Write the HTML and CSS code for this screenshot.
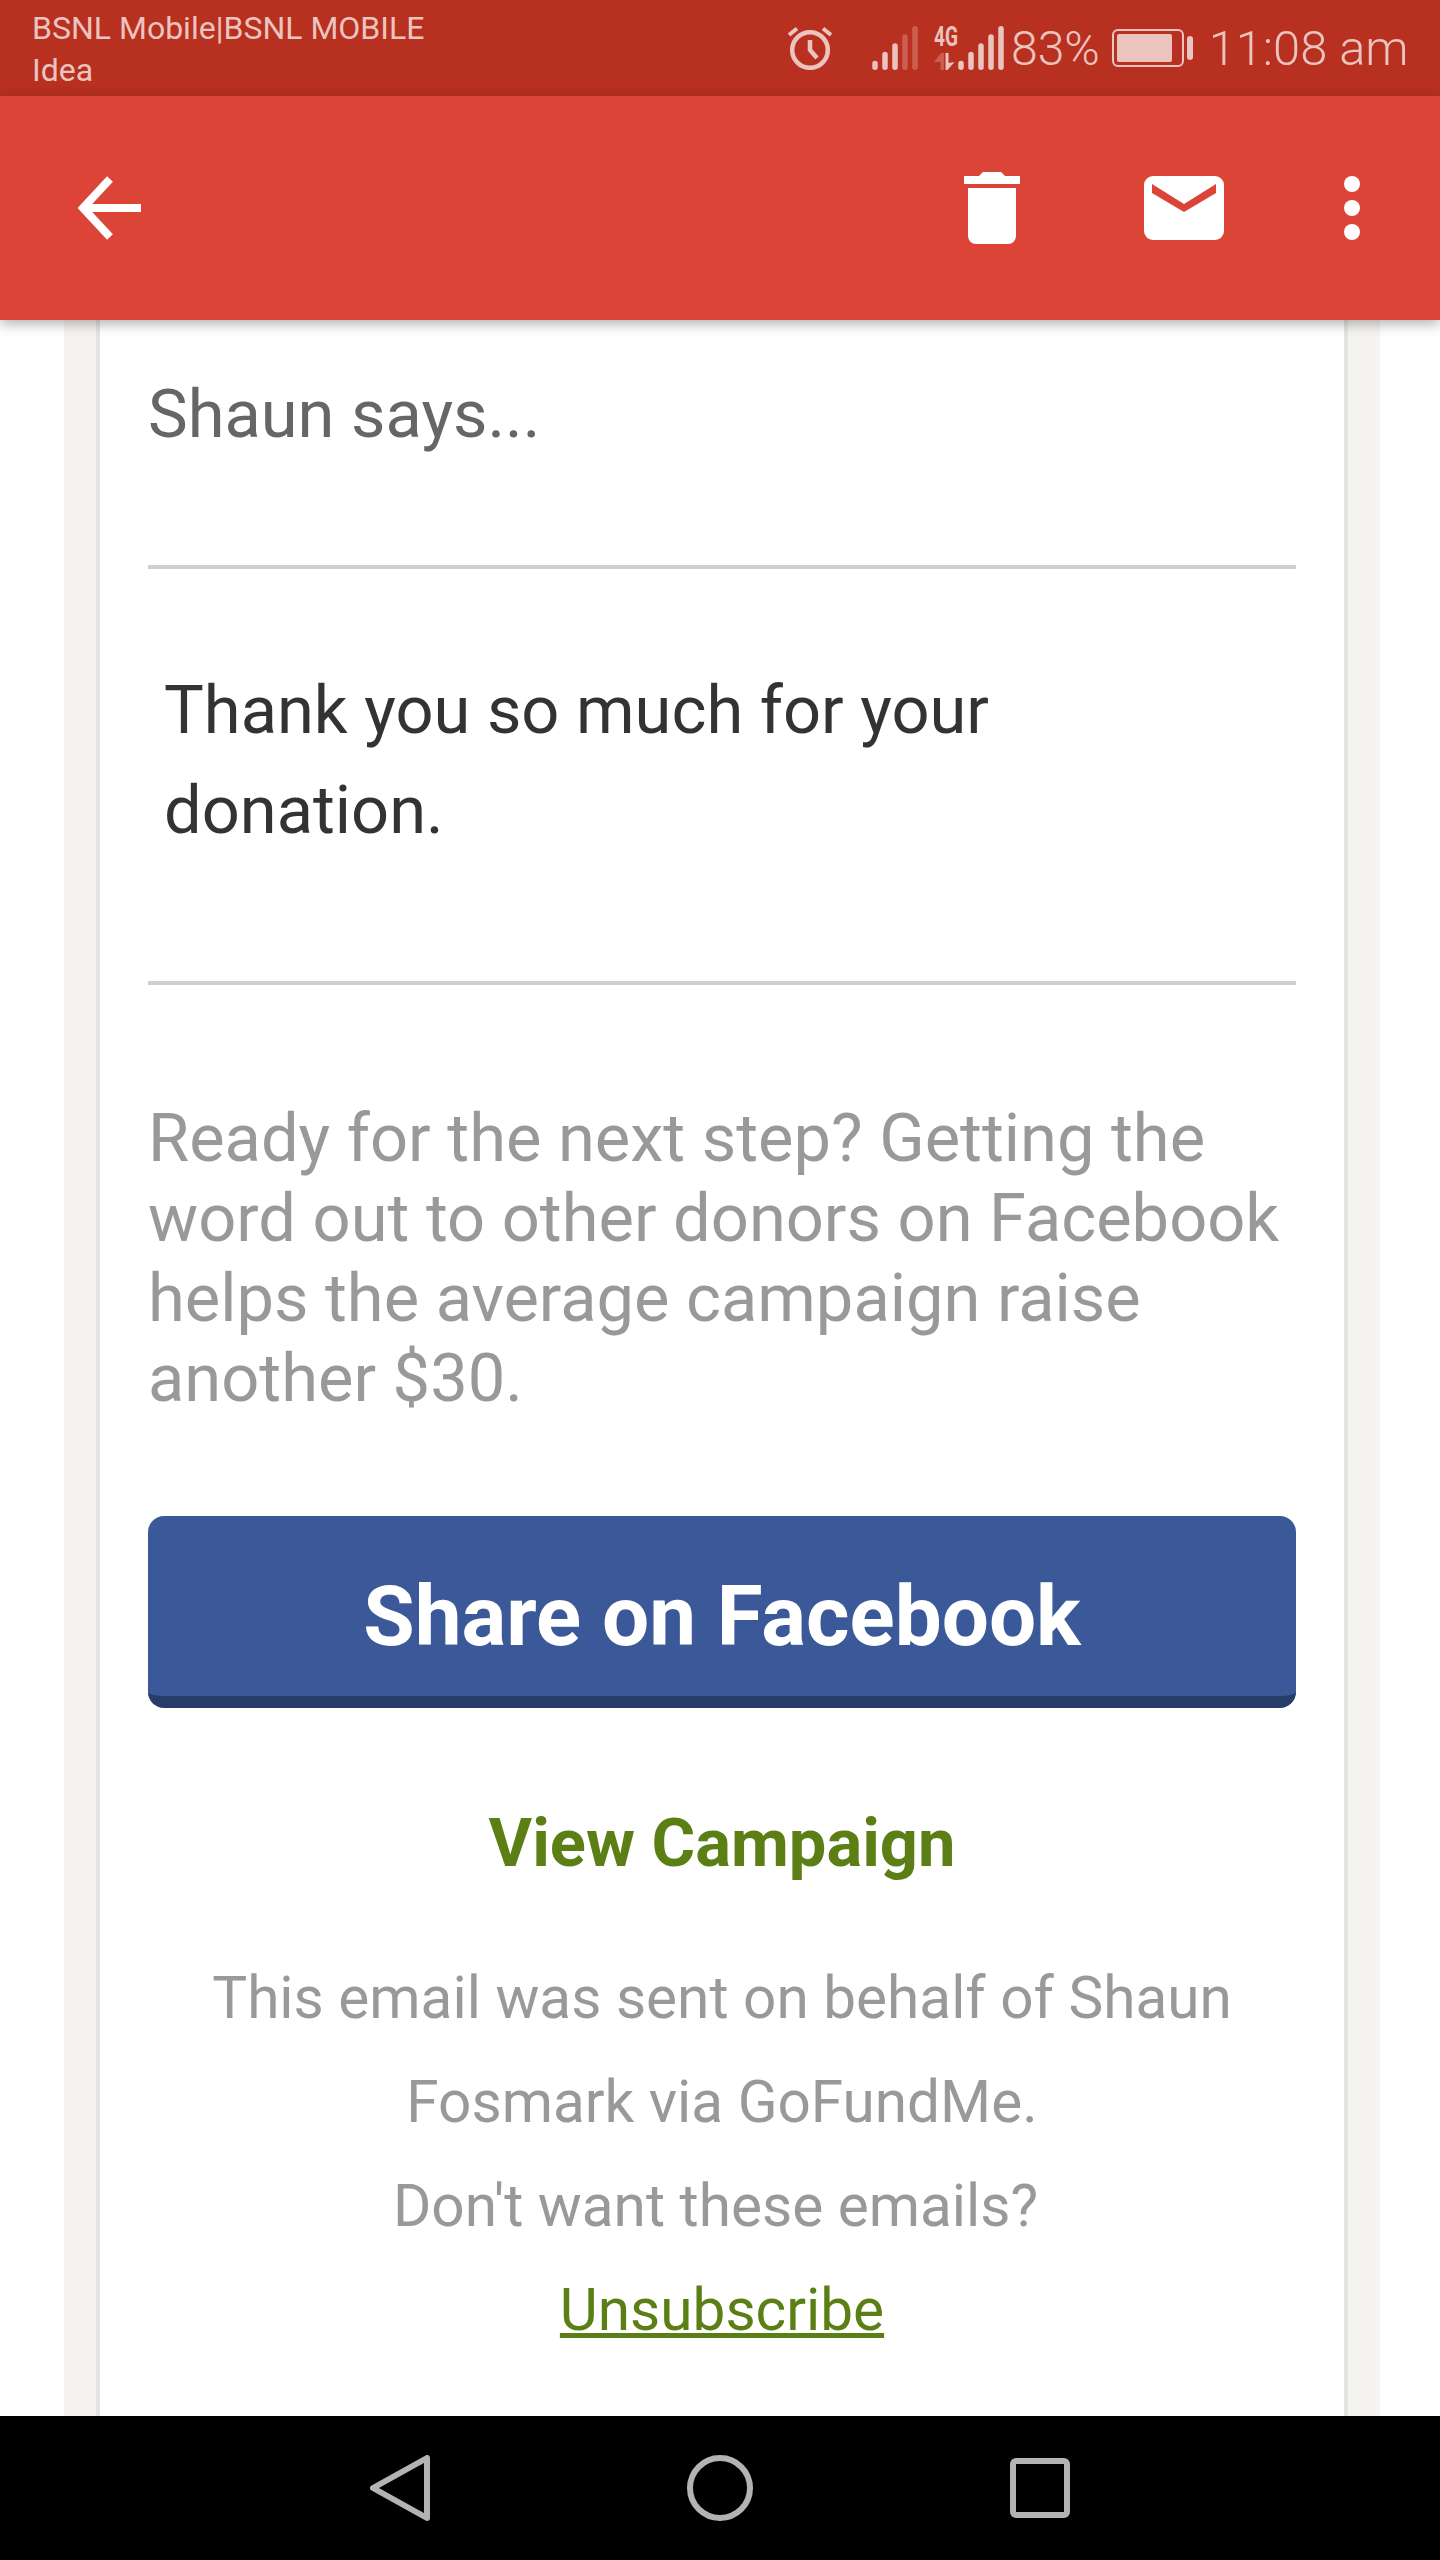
FILE: index.html
```html
<!DOCTYPE html>
<html lang="en">
<head>
  <meta charset="UTF-8" />
  <title>Mail</title>
  <link rel="stylesheet" href="styles.css">
</head>
<body>
<div class="phone">
  <div class="statusbar">
    <div class="carrier">
      <div>BSNL Mobile|BSNL MOBILE</div>
      <div>Idea</div>
    </div>
    <svg class="ic-alarm" width="44" height="44" viewBox="0 0 44 44">
      <circle cx="22" cy="24" r="17.8" fill="none" stroke="#ebc4bf" stroke-width="4.5"/>
      <path d="M22 14v10l7 8" fill="none" stroke="#ebc4bf" stroke-width="4.5"/>
      <path d="M1 9l8-6.5M43 9l-8-6.5" fill="none" stroke="#ebc4bf" stroke-width="4"/>
    </svg>
    <svg class="ic-signal" width="46" height="44" viewBox="0 0 46 44">
      <g fill="none" stroke-width="5.5" stroke-linecap="round">
        <path d="M3 41.2v-3.7M13 41.2v-12.7M23 41.2v-21.2" stroke="#ebc4bf"/>
        <path d="M33 41.2v-30.2M43 41.2v-38.4" stroke="#cd5d50"/>
      </g>
    </svg>
    <svg class="ic-signal2" width="70" height="50" viewBox="0 -6 70 50">
      <text class="lte" x="0" y="20" textLength="24" lengthAdjust="spacingAndGlyphs">4G</text>
      <path d="M0 36l7-9h3v17H6.5V36z" fill="#cd5d50"/>
      <path d="M11.5 27h3v10l6-1-7 8h-2z" fill="#ebc4bf"/>
      <g fill="none" stroke="#ebc4bf" stroke-width="5.5" stroke-linecap="round">
        <path d="M27 41.2v-3.7M37 41.2v-12.7M47 41.2v-21.2M57 41.2v-30.2M67 41.2v-38.4"/>
      </g>
    </svg>
    <span class="pct">83%</span>
    <svg class="ic-battery" width="82" height="38" viewBox="0 0 82 38">
      <rect x="1" y="1" width="70" height="36" rx="5" fill="none" stroke="#ebc4bf" stroke-width="2"/>
      <rect x="5" y="5" width="55" height="28" rx="2" fill="#ebc4bf"/>
      <rect x="75" y="7" width="6" height="24" rx="3" fill="#ebc4bf"/>
    </svg>
    <span class="clock">11:08 am</span>
  </div>

  <div class="toolbar">
    <svg class="ic-back" width="64" height="64" viewBox="0 0 64 64">
      <path d="M32 3L5 32l27 29M5 32h58" fill="none" stroke="#fff" stroke-width="8"/>
    </svg>
    <svg class="ic-trash" width="56" height="72" viewBox="0 0 56 72">
      <path d="M15 4l4-4h18l4 4h15v8H0V4z" fill="#fff"/>
      <path d="M4 16h48v48a8 8 0 0 1-8 8H12a8 8 0 0 1-8-8z" fill="#fff"/>
    </svg>
    <svg class="ic-mail" width="80" height="64" viewBox="0 0 80 64">
      <rect width="80" height="64" rx="9" fill="#fff"/>
      <path d="M8 8l32 20L72 8v9L40 36 8 17z" fill="#db4437"/>
    </svg>
    <div class="dots"><i></i><i></i><i></i></div>
  </div>

  <main class="mailview">
    <div class="wrap">
      <div class="card">
        <div class="says">Shaun says...</div>
        <div class="note">Thank you so much for your donation.</div>
        <p class="next">Ready for the next step? Getting the word out to other donors on Facebook helps the average campaign raise another $30.</p>
        <a class="fb-btn">Share on Facebook</a>
        <a class="view-link">View Campaign</a>
        <div class="foot">
          <div>This email was sent on behalf of Shaun</div>
          <div>Fosmark via GoFundMe.</div>
          <div class="foot-ask">Don't want these emails?</div>
          <div><a class="unsub">Unsubscribe</a></div>
        </div>
      </div>
    </div>
  </main>

  <div class="navbar">
    <svg width="60" height="66" viewBox="0 0 60 66">
      <path d="M57 3v60L3 33z" fill="none" stroke="#b3b3b3" stroke-width="6" stroke-linejoin="round"/>
    </svg>
    <svg width="66" height="66" viewBox="0 0 66 66">
      <circle cx="33" cy="33" r="30" fill="none" stroke="#b3b3b3" stroke-width="6"/>
    </svg>
    <svg width="60" height="60" viewBox="0 0 60 60">
      <rect x="3" y="3" width="54" height="54" rx="3" fill="none" stroke="#b3b3b3" stroke-width="6"/>
    </svg>
  </div>
</div>
</body>
</html>
```

FILE: styles.css
```css
* { box-sizing: border-box; }
html, body { margin: 0; padding: 0; }
body { font-family: Roboto, sans-serif; background: #fff; }
.phone { width: 1440px; height: 2560px; display: flex; flex-direction: column; overflow: hidden; }

.statusbar { height: 96px; flex: none; background: #b73020; color: #ebc4bf; display: flex; align-items: flex-start; padding-left: 32px; }
.carrier { font-size: 32px; line-height: 42px; padding-top: 7px; width: 756px; }
.ic-alarm { margin-top: 26px; }
.ic-signal { margin: 26px 0 0 40px; }
.ic-signal2 { margin: 20px 0 0 16px; }
.lte { font: 700 27px Roboto, sans-serif; fill: #ebc4bf; }
.pct { font-size: 48px; font-weight: 300; line-height: 56px; margin: 21px 0 0 7px; }
.ic-battery { margin: 29px 0 0 12px; }
.clock { font-size: 48.8px; font-weight: 300; line-height: 56px; margin: 21px 0 0 15px; }

.toolbar { height: 224px; flex: none; background: #db4437; display: flex; align-items: center; padding-left: 78px; box-shadow: 0 4px 12px rgba(0,0,0,0.3); position: relative; z-index: 2; }
.ic-back { margin-right: 822px; }
.ic-mail { margin-left: 124px; }
.dots { margin-left: 120px; display: flex; flex-direction: column; gap: 8px; }
.dots i { display: block; width: 16px; height: 16px; border-radius: 50%; background: #fff; }

.mailview { flex: 1; overflow: hidden; }
.wrap { width: 1316px; margin-left: 64px; padding: 0 32px; background: #f5f4f0; height: 100%; }
.card { background: #fff; border: solid #e4e4e4; border-width: 0 4px; padding: 0 48px; height: 100%; }

.says { font-size: 66.8px; line-height: 75px; color: #666; padding: 57px 0 113px; border-bottom: 4px solid #d0d0d0; }
.note { font-size: 66.8px; line-height: 100px; color: #333; padding: 91px 16px 121px; border-bottom: 4px solid #d0d0d0; }
.next { font-size: 66.8px; line-height: 80px; color: #999; margin: 113px 0 0; }
.fb-btn { display: block; height: 192px; margin-top: 98px; padding-top: 20px; background: #3b5998; border-radius: 16px; border-bottom: 12px solid #263c69; color: #fff; font-size: 83.6px; font-weight: 700; line-height: 160px; text-align: center; }
.view-link { display: block; margin-top: 95px; font-size: 66.8px; font-weight: 700; line-height: 80px; color: #5b7f14; text-align: center; }
.foot { margin-top: 63px; font-size: 58.5px; line-height: 104px; color: #999; text-align: center; }
.foot-ask { padding-right: 13px; }
.unsub { color: #5b7f14; text-decoration: underline; }

.navbar { height: 144px; flex: none; background: #000; position: relative; display: flex; align-items: center; gap: 257px; padding-left: 370px; }
```
